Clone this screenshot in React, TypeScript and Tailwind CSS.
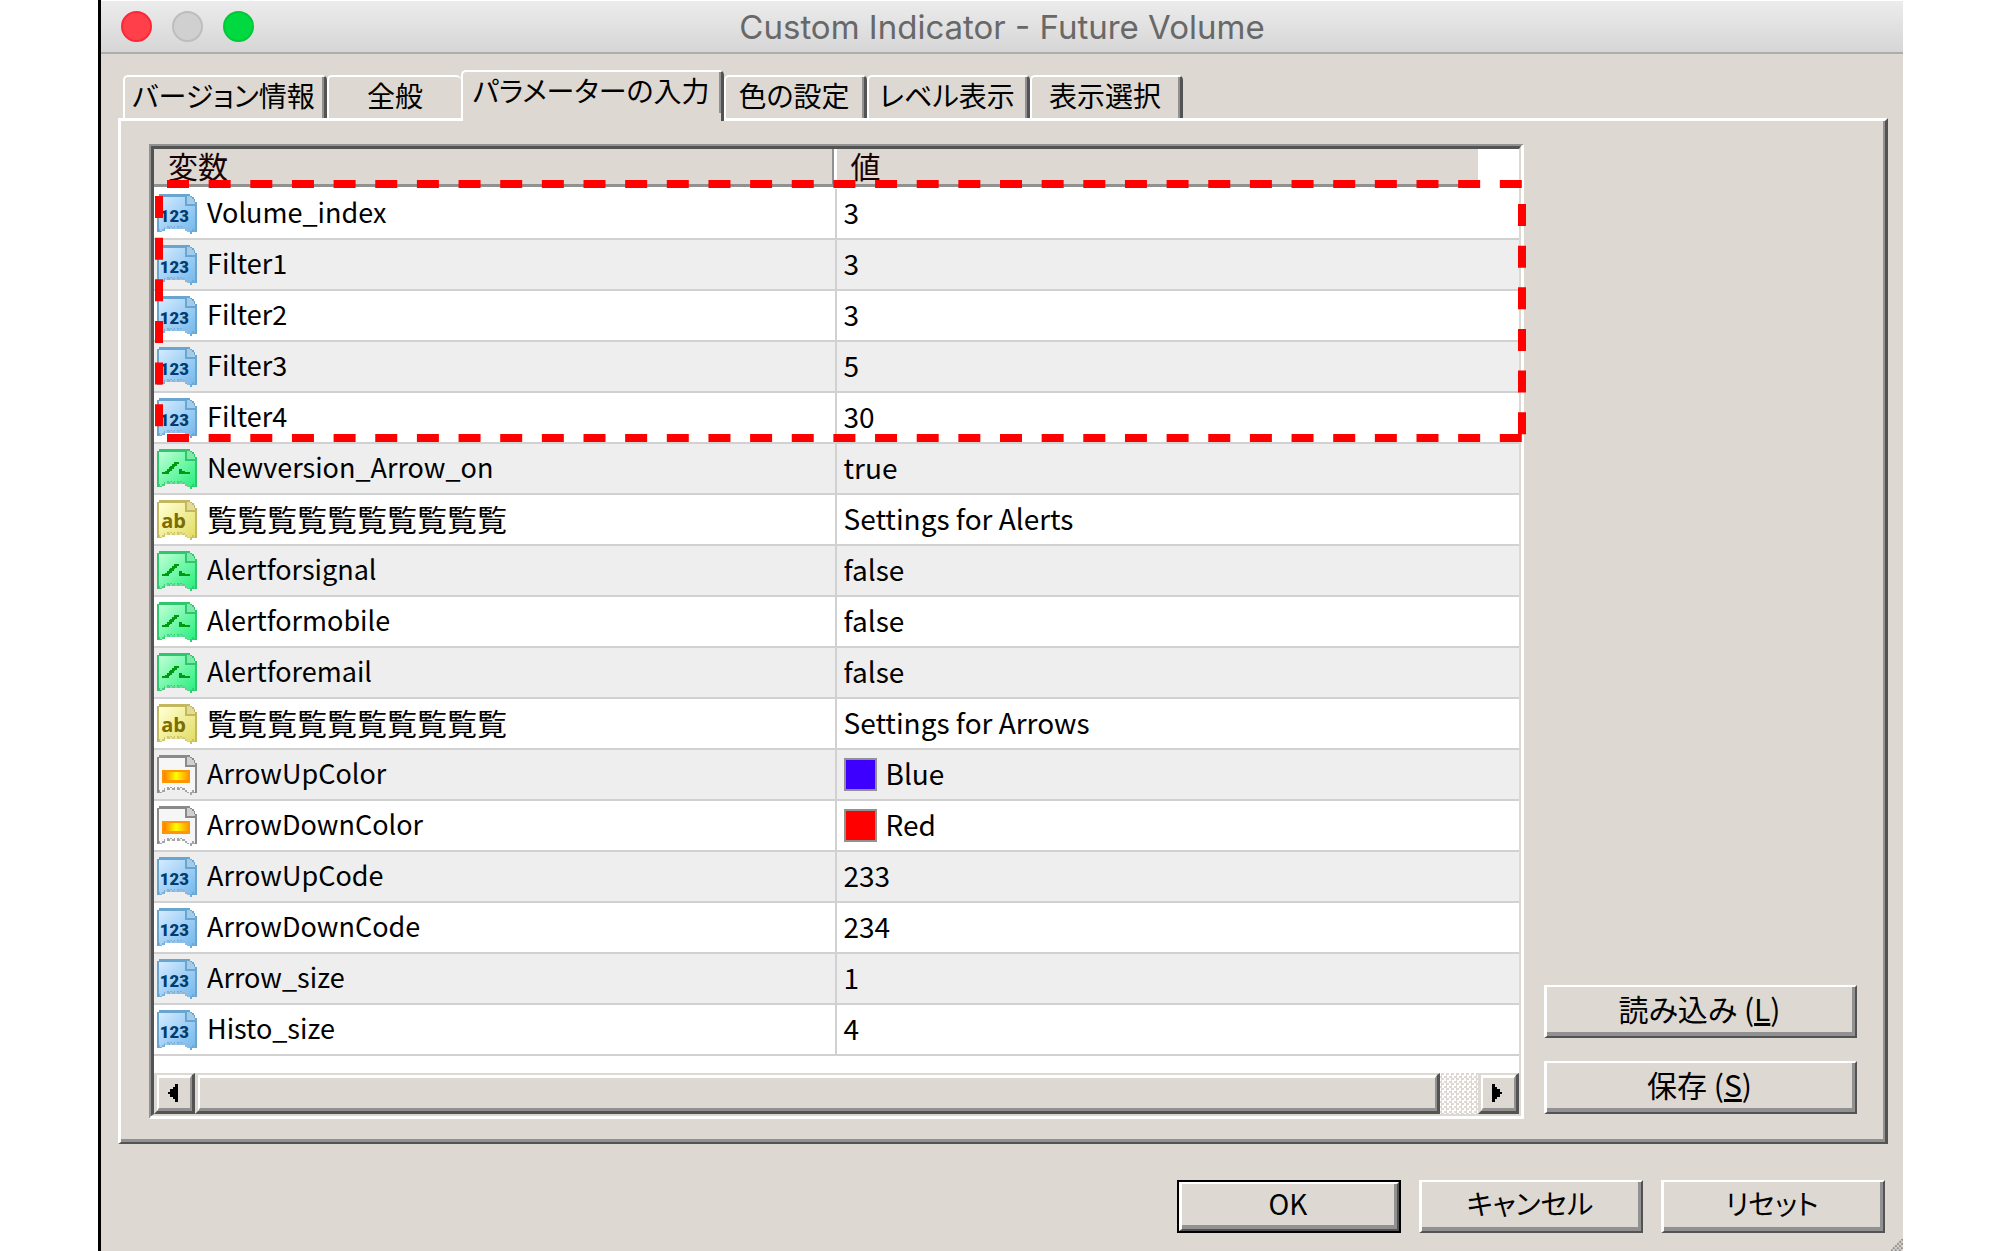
import React from 'react';

type IconKind = 'number' | 'bool' | 'string' | 'color';

interface Param {
  icon: IconKind;
  name: string;
  value: string;
  swatch?: string;
}

const PARAMS: Param[] = [
  { icon: 'number', name: 'Volume_index', value: '3' },
  { icon: 'number', name: 'Filter1', value: '3' },
  { icon: 'number', name: 'Filter2', value: '3' },
  { icon: 'number', name: 'Filter3', value: '5' },
  { icon: 'number', name: 'Filter4', value: '30' },
  { icon: 'bool', name: 'Newversion_Arrow_on', value: 'true' },
  { icon: 'string', name: '覧覧覧覧覧覧覧覧覧覧', value: 'Settings for Alerts' },
  { icon: 'bool', name: 'Alertforsignal', value: 'false' },
  { icon: 'bool', name: 'Alertformobile', value: 'false' },
  { icon: 'bool', name: 'Alertforemail', value: 'false' },
  { icon: 'string', name: '覧覧覧覧覧覧覧覧覧覧', value: 'Settings for Arrows' },
  { icon: 'color', name: 'ArrowUpColor', value: 'Blue', swatch: 'bg-[#3d00ff]' },
  { icon: 'color', name: 'ArrowDownColor', value: 'Red', swatch: 'bg-[#ff0000]' },
  { icon: 'number', name: 'ArrowUpCode', value: '233' },
  { icon: 'number', name: 'ArrowDownCode', value: '234' },
  { icon: 'number', name: 'Arrow_size', value: '1' },
  { icon: 'number', name: 'Histo_size', value: '4' },
];

const TABS = [
  { label: 'バージョン情報', width: 'w-[204px]' },
  { label: '全般', width: 'w-[134px]' },
  { label: 'パラメーターの入力', width: 'w-[263px]' },
  { label: '色の設定', width: 'w-[143px]' },
  { label: 'レベル表示', width: 'w-[163px]' },
  { label: '表示選択', width: 'w-[153px]' },
];
const ACTIVE_TAB = 2;

const PAPER: Record<IconKind, { from: string; to: string; edge: string; fold: string }> = {
  number: { from: '#cfe9ff', to: '#6fb4ea', edge: '#6aa5d0', fold: '#a3cbea' },
  bool: { from: '#b8ffd2', to: '#1fee78', edge: '#2fc66e', fold: '#7deaa8' },
  string: { from: '#ffffd0', to: '#e0da5c', edge: '#c3b860', fold: '#e3dc98' },
  color: { from: '#f6f6f6', to: '#f6f6f6', edge: '#8a8a8a', fold: '#d0d0d0' },
};

function ParamIcon({ kind }: { kind: IconKind }) {
  const c = PAPER[kind];
  return (
    <svg viewBox="0 0 24 24" className="block h-10 w-10 shrink-0" shapeRendering="crispEdges" aria-hidden="true">
      <defs>
        <linearGradient id={`paper-${kind}`} x1="0" y1="0" x2="1" y2="1">
          <stop offset="0.1" stopColor={c.from} />
          <stop offset="1" stopColor={c.to} />
        </linearGradient>
        <linearGradient id="spectrum">
          <stop offset="0" stopColor="#ff7a00" />
          <stop offset="0.5" stopColor="#ffff00" />
          <stop offset="1" stopColor="#ff9500" />
        </linearGradient>
      </defs>
      <path
        d="M1 0H20V1H21V2H22V3H23V5H24V23H21V24H20V23H19V22H18V21H17V20H15V21H14V20H12V21H11V20H9V21H7V20H6V21H5V22H3V23H0V1H1Z"
        fill={`url(#paper-${kind})`}
      />
      <path d="M1 0H18V1.5H1V23H0V1H1Z" fill={c.edge} />
      <path d="M23 7H24V23H23Z" fill={c.edge} />
      <path d="M17 0H20V1H21V2H22V3H23V5H24V7H17Z" fill={c.edge} />
      <path d="M18 1H20V2H21V3H22V5H23V6H18Z" fill={c.fold} />
      <path
        d="M0 22H1V21H2V22H3V21H4V20H5V21H6V19H7V20H8V19H9V20H10V19H11V20H12V19H13V20H14V19H15V20H17V21H18V22H19V23H20V22H21V21H22V22H24V23H21V24H20V23H18V22H17V21H15V20H14V21H12V20H11V21H9V20H8V21H5V22H3V23H0Z"
        fill={c.edge}
        opacity="0.75"
      />
      {kind === 'number' && (
        <text x="10.4" y="16.8" textAnchor="middle" fill="#003d70" className="font-['Roboto'] text-[10px] font-black">
          123
        </text>
      )}
      {kind === 'string' && (
        <text x="10" y="17" textAnchor="middle" fill="#7d6c00" className="font-['Open_Sans'] text-[12px] font-bold">
          ab
        </text>
      )}
      {kind === 'bool' && (
        <g fill="#009a10">
          <path d="M3 14H5V13H6V12H7V11H8V10H9V9H10V8H13V9H12V10H11V11H10V12H9V13H8V14H7V15H3Z" />
          <path d="M13 12H15V13H17V14H20V15H13Z" />
        </g>
      )}
      {kind === 'color' && (
        <>
          <rect x="3" y="9" width="17" height="7.5" fill="#ff9500" />
          <rect x="4" y="10" width="15" height="5" fill="url(#spectrum)" />
        </>
      )}
    </svg>
  );
}

interface DialogButtonProps {
  children: React.ReactNode;
  className?: string;
}

function DialogButton({ children, className = '' }: DialogButtonProps) {
  return (
    <button type="button" className={`h-[53px] bg-[#ddd8d1] text-center ${className}`}>
      <span className="flex h-full items-center justify-center border-t-2 border-r-2 border-b-2 border-l-3 border-t-white border-r-[#535353] border-b-[#535353] border-l-white">
        <span className="flex h-full w-full items-center justify-center border-r-3 border-b-4 border-[#919191] pb-1 whitespace-pre">
          {children}
        </span>
      </span>
    </button>
  );
}

function ScrollPart({ children, className, label }: { children?: React.ReactNode; className: string; label: string }) {
  return (
    <button
      type="button"
      aria-label={label}
      className={`h-[41px] border-t-2 border-r-3 border-b-3 border-l-3 border-t-[#ddd8d1] border-r-[#535353] border-b-[#535353] border-l-[#ddd8d1] bg-[#ddd8d1] ${className}`}
    >
      <span className="flex h-full items-center justify-center border-t-3 border-r-2 border-b-3 border-l-2 border-t-white border-r-[#919191] border-b-[#919191] border-l-white pr-1">
        {children}
      </span>
    </button>
  );
}

function TitleBar() {
  return (
    <header className="flex h-[54px] items-center border-t border-b-2 border-t-white border-b-[#adadad] bg-linear-to-b from-[#ececec] to-[#d6d6d6] px-5">
      <div className="flex flex-1 gap-5">
        <button type="button" aria-label="Close" className="h-[31px] w-[31px] rounded-full border-2 border-[#ff2638] bg-[#ff404a]" />
        <button type="button" aria-label="Minimize" className="h-[31px] w-[31px] rounded-full border-2 border-[#bdbdbd] bg-[#d0d0d0]" />
        <button type="button" aria-label="Zoom" className="h-[31px] w-[31px] rounded-full border-2 border-[#00c937] bg-[#00da40]" />
      </div>
      <h1 className="font-['Inter'] text-[33px] leading-9 text-[#686868]">Custom Indicator - Future Volume</h1>
      <div className="flex-1" />
    </header>
  );
}

function Tabs() {
  return (
    <div role="tablist" className="flex h-[51px] items-end pl-[5px]">
      {TABS.map((tab, i) => {
        const beforeActive = i === ACTIVE_TAB - 1;
        return (
          <button
            key={tab.label}
            type="button"
            role="tab"
            aria-selected={i === ACTIVE_TAB}
            className={`rounded-t-[5px] border-t-2 border-l-2 border-t-white border-l-white bg-[#ddd8d1] whitespace-nowrap ${tab.width} ${
              i === ACTIVE_TAB ? 'z-10 h-[51px] pb-2' : 'mb-[3px] h-[43px]'
            } ${beforeActive ? '' : 'border-r-3 border-r-[#535353]'}`}
          >
            <span className={`flex h-full items-center justify-center pb-[5px] ${beforeActive ? '' : 'border-r-2 border-[#919191]'}`}>
              {tab.label}
            </span>
          </button>
        );
      })}
    </div>
  );
}

// Dashed red frame laid over the first five parameters.
function Highlight() {
  return (
    <svg className="pointer-events-none absolute top-[38px] left-2 h-[254px] w-[calc(100%-7px)] overflow-visible" aria-hidden="true">
      <g stroke="#ff0000" strokeWidth="8" strokeDasharray="22 19.65">
        <line x1="8" y1="0" x2="100%" y2="0" />
        <line x1="8" y1="100%" x2="100%" y2="100%" />
        <line x1="0" y1="12" x2="0" y2="100%" />
        <line x1="100%" y1="20" x2="100%" y2="100%" />
      </g>
    </svg>
  );
}

function ParamTable() {
  return (
    <div className="relative flex-1 border-t-2 border-r-3 border-b-3 border-l-2 border-t-[#919191] border-r-white border-b-white border-l-[#919191]">
      <div className="border-t-3 border-r-2 border-b-2 border-l-3 border-t-[#535353] border-r-[#ddd8d1] border-b-[#ddd8d1] border-l-[#535353] bg-white">
        <table className="w-full table-fixed border-separate border-spacing-0">
          <colgroup>
            <col className="w-1/2" />
            <col />
            <col className="w-[41px]" />
          </colgroup>
          <thead>
            <tr className="h-10 text-left text-[30px] text-[#1a0000]">
              <th className="border-b-2 border-white p-0 font-normal">
                <div className="border-r-3 border-white">
                  <div className="flex h-[38px] items-center border-r-2 border-b-3 border-[#919191] bg-[#ddd8d1] pb-1 pl-[14px]">変数</div>
                </div>
              </th>
              <th className="border-b-2 border-white p-0 font-normal">
                <div className="flex h-[38px] items-center border-b-3 border-[#919191] bg-[#ddd8d1] pb-1 pl-[14px]">値</div>
              </th>
              <td className="border-b-2 border-white p-0" />
            </tr>
          </thead>
          <tbody>
            {PARAMS.map((p, i) => (
              <tr key={i} className="h-[51px] odd:bg-white even:bg-[#eeeeee]">
                <td className="border-b-2 border-[#d1d1d1] p-0">
                  <div className="flex h-[49px] items-center gap-[10px] border-r-2 border-[#d1d1d1] pl-[3px] whitespace-nowrap">
                    <ParamIcon kind={p.icon} />
                    <span className={`pb-[3px] ${p.icon === 'string' ? 'text-[30px]' : 'text-[27px]'}`}>{p.name}</span>
                  </div>
                </td>
                <td colSpan={2} className="border-b-2 border-[#d1d1d1] p-0">
                  <div className="flex h-[49px] items-center gap-[9px] pl-[7px] whitespace-nowrap">
                    {p.swatch && <span className={`h-[33px] w-[33px] border-2 border-[#919191] ${p.swatch}`} />}
                    <span className="pb-[3px]">{p.value}</span>
                  </div>
                </td>
              </tr>
            ))}
          </tbody>
        </table>
        <div className="mt-[17px] flex bg-[repeating-conic-gradient(#ddd8d1_0_25%,white_0_50%)] bg-[length:5px_5px]">
          <ScrollPart label="Scroll left" className="w-[41px]">
            <svg viewBox="0 0 10 18" className="h-[18px] w-[10px]" shapeRendering="crispEdges" aria-hidden="true">
              <path d="M10 0V18H7V15H5V13H2V10H0V8H2V5H5V3H7V0Z" />
            </svg>
          </ScrollPart>
          <ScrollPart label="Scroll position" className="mr-[38px] flex-1" />
          <ScrollPart label="Scroll right" className="w-[41px]">
            <svg viewBox="0 0 10 18" className="h-[18px] w-[10px]" shapeRendering="crispEdges" aria-hidden="true">
              <path d="M0 0V18H3V15H5V13H8V10H10V8H8V5H5V3H3V0Z" />
            </svg>
          </ScrollPart>
        </div>
      </div>
      <Highlight />
    </div>
  );
}

export default function App() {
  return (
    <div className="min-h-screen bg-white px-[98px] font-['Noto_Sans_CJK_JP',sans-serif] text-[28px] leading-8 text-black">
      <main className="relative min-h-screen border-l-3 border-black bg-[#ddd8d1] pb-[18px]">
        <TitleBar />
        <div className="pt-4 pr-[15px] pl-[17px] [font-feature-settings:'palt']">
          <Tabs />
          <section className="-mt-[3px] border-t-3 border-r-3 border-b-2 border-l-3 border-t-white border-r-[#535353] border-b-[#535353] border-l-white">
            <div className="flex gap-5 border-r-2 border-b-3 border-[#919191] pt-[23px] pr-[26px] pb-5 pl-7">
              <ParamTable />
              <div className="flex w-[313px] flex-col justify-end gap-[23px] pb-[5px] text-[30px]">
                <DialogButton>
                  読み込み (<u>L</u>)
                </DialogButton>
                <DialogButton>
                  保存 (<u>S</u>)
                </DialogButton>
              </div>
            </div>
          </section>
          <footer className="mt-9 flex justify-end gap-[18px] pr-[3px]">
            <DialogButton className="w-56 border-2 border-black">OK</DialogButton>
            <DialogButton className="w-56">キャンセル</DialogButton>
            <DialogButton className="w-56">リセット</DialogButton>
          </footer>
        </div>
        <svg viewBox="0 0 12 12" className="absolute right-0 bottom-0 h-3 w-3" aria-hidden="true">
          <path d="M0 12L12 0M4 12L12 4M8 12L12 8" stroke="#919191" strokeWidth="2" strokeDasharray="2 1" />
        </svg>
      </main>
    </div>
  );
}
